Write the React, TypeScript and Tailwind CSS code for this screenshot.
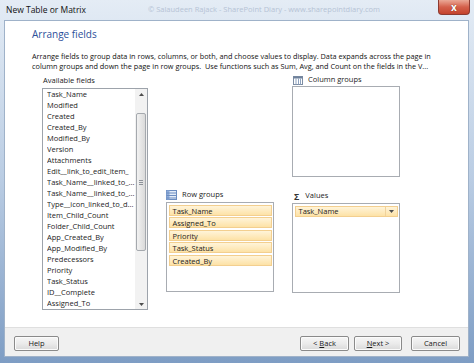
import React from "react";

const fields = [
  "Task_Name",
  "Modified",
  "Created",
  "Created_By",
  "Modified_By",
  "Version",
  "Attachments",
  "Edit__link_to_edit_item_",
  "Task_Name__linked_to_...",
  "Task_Name__linked_to_...",
  "Type__icon_linked_to_d...",
  "Item_Child_Count",
  "Folder_Child_Count",
  "App_Created_By",
  "App_Modified_By",
  "Predecessors",
  "Priority",
  "Task_Status",
  "ID__Complete",
  "Assigned_To",
];

const rowGroups = ["Task_Name", "Assigned_To", "Priority", "Task_Status", "Created_By"];

const ColumnIcon = () => (
  <svg width="10" height="9" viewBox="0 0 10 9">
    <rect x="0.5" y="0.5" width="9" height="8" fill="#fff" stroke="#7d8da3" />
    <rect x="0.5" y="0.5" width="9" height="2" fill="#6f819b" />
    <line x1="3" y1="2.5" x2="3" y2="8.5" stroke="#8fa3bf" />
    <line x1="5.5" y1="2.5" x2="5.5" y2="8.5" stroke="#8fa3bf" />
    <line x1="7.5" y1="2.5" x2="7.5" y2="8.5" stroke="#8fa3bf" />
  </svg>
);

const RowIcon = () => (
  <svg width="11" height="10" viewBox="0 0 11 10">
    <rect x="0.5" y="0.5" width="10" height="9" fill="#e3ecf8" stroke="#6b8cc0" />
    <rect x="0.5" y="0.5" width="3" height="9" fill="#8eabd9" />
    <line x1="0.5" y1="3" x2="10.5" y2="3" stroke="#6b8cc0" />
    <line x1="0.5" y1="5.5" x2="10.5" y2="5.5" stroke="#6b8cc0" />
    <line x1="0.5" y1="8" x2="10.5" y2="8" stroke="#6b8cc0" />
  </svg>
);

const Arrow = ({ up }: { up?: boolean }) => (
  <svg width="5" height="3" viewBox="0 0 5 3">
    <polygon points={up ? "0,3 5,3 2.5,0" : "0,0 5,0 2.5,3"} fill="#4d4d4d" />
  </svg>
);

function Btn({ children, w }: { children: React.ReactNode; w: string }) {
  return (
    <div
      className={`${w} h-[15px] rounded-[2px] border border-[#8a8a8a] bg-gradient-to-b from-[#f6f6f6] via-[#ebebeb] to-[#d9d9d9] flex items-center justify-center text-[7.5px] text-[#1a1a1a] shadow-[inset_0_0_0_1px_#fbfbfb]`}
    >
      {children}
    </div>
  );
}

export default function App() {
  return (
    <div className="w-[474px] h-[363px] flex flex-col bg-gradient-to-b from-[#e4ecf5] via-[#b9cce3] to-[#7e9dc4] font-['Open_Sans',sans-serif] overflow-hidden">
      {/* title bar */}
      <div className="h-[20px] flex items-start shrink-0">
        <div className="self-center pl-[6px] text-[8.5px] text-[#111] whitespace-nowrap">New Table or Matrix</div>
        <div className="self-center ml-[62px] text-[7.5px] text-[#b6c3d4] whitespace-nowrap">
          © Salaudeen Rajack - SharePoint Diary - www.sharepointdiary.com
        </div>
        <div className="flex-1" />
        <div className="mr-[4px] w-[32px] h-[15px] rounded-b-[4px] border border-t-0 border-[#8c3a30] bg-gradient-to-b from-[#eaa896] via-[#d4604b] to-[#c4432c] flex items-center justify-center">
          <span className="text-white text-[10px] font-bold leading-none [text-shadow:0_0_1px_#5a1a10]">x</span>
        </div>
      </div>

      {/* client */}
      <div className="flex-1 ml-[4px] mr-[5px] mb-[6px] border border-[#9fb2c9] bg-white flex flex-col">
        <div className="flex-1 flex flex-col">
          <div className="pl-[27px] pt-[7px] text-[10px] leading-[12px] text-[#2c4f9a]">Arrange fields</div>
          <div className="pl-[27px] mt-[11px] text-[7.3px] leading-[10px] text-[#111] whitespace-nowrap">
            <div>Arrange fields to group data in rows, columns, or both, and choose values to display. Data expands across the page in</div>
            <div>column groups and down the page in row groups.&nbsp; Use functions such as Sum, Avg, and Count on the fields in the V...</div>
          </div>

          <div className="mt-[3px] ml-[37px] flex items-start text-[7.5px] text-[#1c1c1c]">
            {/* available fields */}
            <div className="w-[106px] flex flex-col">
              <div className="h-[12px] leading-[12px] pl-[1px]">Available fields</div>
              <div className="mt-[2px] h-[222px] border border-[#9da3ab] flex">
                <div className="flex-1 flex flex-col pl-[4px]">
                  {fields.map((f, i) => (
                    <div key={i} className="h-[11.25px] leading-[10px] whitespace-nowrap overflow-hidden">
                      {f}
                    </div>
                  ))}
                </div>
                <div className="w-[12px] bg-[#f2f2f2] flex flex-col items-center">
                  <div className="h-[10px] flex items-center justify-center">
                    <Arrow up />
                  </div>
                  <div className="mt-[14px] w-[10px] h-[138px] rounded-[2px] border border-[#a5a9ae] bg-gradient-to-r from-[#f2f2f2] to-[#dadada] flex items-center justify-center">
                    <div className="flex flex-col gap-[1px]">
                      <div className="w-[4px] h-[1px] bg-[#8d9299]" />
                      <div className="w-[4px] h-[1px] bg-[#8d9299]" />
                      <div className="w-[4px] h-[1px] bg-[#8d9299]" />
                    </div>
                  </div>
                  <div className="flex-1" />
                  <div className="h-[10px] flex items-center justify-center">
                    <Arrow />
                  </div>
                </div>
              </div>
            </div>

            {/* row groups */}
            <div className="ml-[18px] w-[108px] pt-[115px] flex flex-col">
              <div className="h-[12px] flex items-center gap-[5px]">
                <RowIcon />
                <span>Row groups</span>
              </div>
              <div className="mt-[1px] h-[90px] border border-[#a8acb2] p-[1.5px] flex flex-col gap-[1.5px]">
                {rowGroups.map((r) => (
                  <div
                    key={r}
                    className="h-[11px] leading-[10px] pl-[3px] border border-[#f3cf8f] bg-gradient-to-b from-[#fff4d9] to-[#fde2a6]"
                  >
                    {r}
                  </div>
                ))}
              </div>
            </div>

            {/* column groups + values */}
            <div className="ml-[18px] w-[108px] flex flex-col">
              <div className="h-[12px] flex items-center gap-[5px] pl-[1px]">
                <ColumnIcon />
                <span>Column groups</span>
              </div>
              <div className="h-[91px] border border-[#a8acb2]" />
              <div className="mt-[13px] h-[12px] flex items-center gap-[6px] pl-[2px]">
                <span className="text-[9px] font-bold leading-none text-[#333]">Σ</span>
                <span>Values</span>
              </div>
              <div className="mt-[1px] h-[90px] border border-[#a8acb2] p-[1.5px]">
                <div className="h-[11px] flex items-center border border-[#f3cf8f] bg-gradient-to-b from-[#fff4d9] to-[#fde2a6]">
                  <span className="flex-1 pl-[3px] leading-[10px]">Task_Name</span>
                  <div className="w-[12px] h-full border-l border-[#f0d29c] flex items-center justify-center">
                    <Arrow />
                  </div>
                </div>
              </div>
            </div>
          </div>
        </div>

        {/* buttons */}
        <div className="h-[29px] shrink-0 border-t border-[#dfdfdf] bg-[#f0f0f0] flex items-start pt-[8px] pl-[9px] pr-[8px]">
          <Btn w="w-[45px]">Help</Btn>
          <div className="flex-1" />
          <Btn w="w-[49px]">
            &lt; <span className="underline ml-[2px]">B</span>ack
          </Btn>
          <div className="ml-[5px]">
            <Btn w="w-[48px]">
              <span className="underline">N</span>ext &gt;
            </Btn>
          </div>
          <div className="ml-[9px]">
            <Btn w="w-[49px]">Cancel</Btn>
          </div>
        </div>
      </div>
    </div>
  );
}
